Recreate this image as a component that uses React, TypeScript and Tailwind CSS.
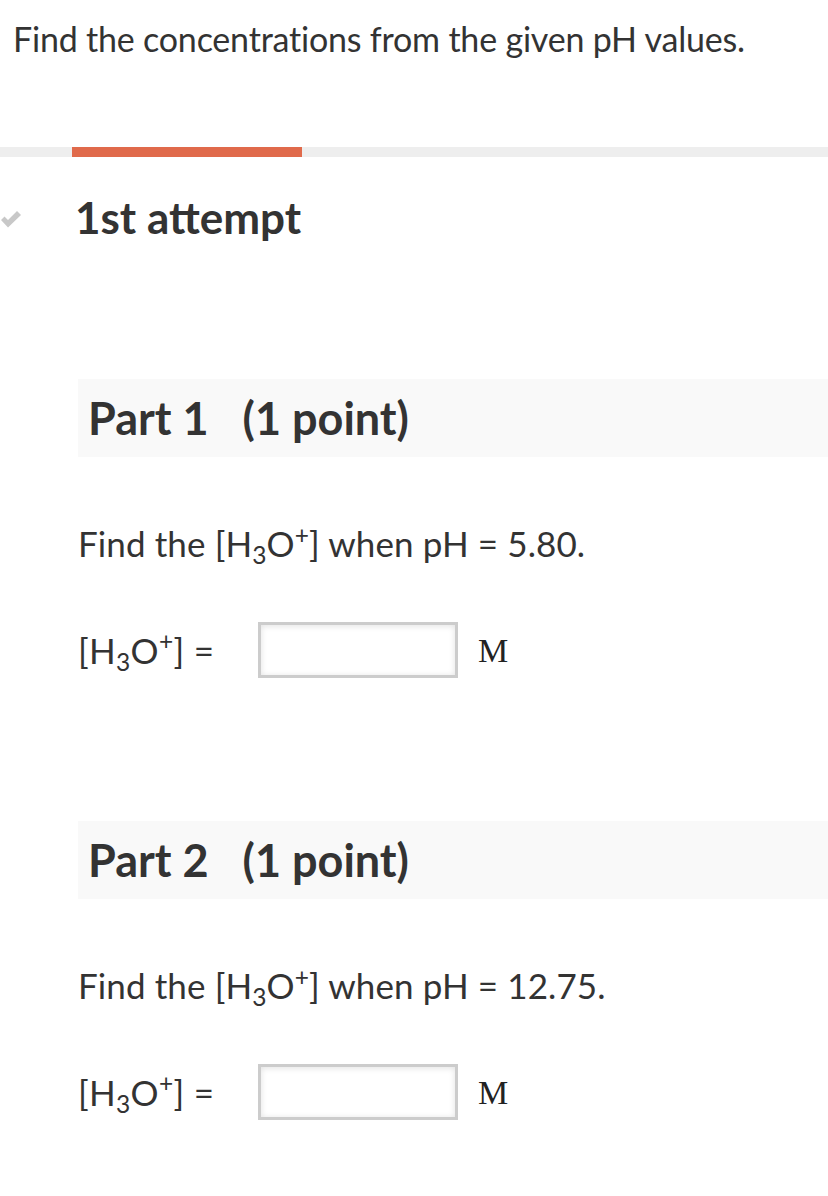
import React from "react";

function Check() {
  return (
    <svg width="22" height="20" viewBox="0 0 22 20" className="block">
      <path d="M1 11 L4.5 7.5 L8 11 L17 2 L21 6 L8 18.5 Z" fill="#c8c8c8" />
    </svg>
  );
}

function H3O() {
  return (
    <span>
      [H<sub className="text-[0.7em] align-baseline relative top-[0.3em]">3</sub>O<sup className="text-[0.7em] align-baseline relative -top-[0.55em]">+</sup>]
    </span>
  );
}

function Part({ n, ph, top }: { n: number; ph: string; top: string }) {
  return (
    <div className={top}>
      <div className="bg-[#f9f9f9] h-[78px] flex items-center pl-[10px] text-[45px] font-bold text-[#333] leading-none">
        <span>Part {n}</span>
        <span className="ml-[34px]">(1 point)</span>
      </div>
      <div className="mt-[64px] text-[35px] text-[#333] leading-[44px] tracking-[0.1px]">
        Find the <H3O /> when pH = {ph}.
      </div>
      <div className="mt-[57px] flex items-center">
        <div className="text-[35px] text-[#333] w-[180px] tracking-[0.3px]">
          <H3O /> =
        </div>
        <div className="w-[200px] h-[56px] border-[3px] border-[#cccccc] bg-white shadow-[inset_0_1px_6px_rgba(0,0,0,0.12)]" />
        <div className="ml-[20px] text-[34px] text-[#222] font-['Liberation_Serif',serif]">M</div>
      </div>
    </div>
  );
}

export default function App() {
  return (
    <div className="w-[828px] h-[1196px] bg-white font-['Lato',sans-serif] overflow-hidden">
      <div className="pt-[17px] pl-[13px] text-[34px] text-[#333] leading-[44px] tracking-[-0.2px]">
        Find the concentrations from the given pH values.
      </div>
      <div className="mt-[86px] h-[10px] bg-[#eeeeee]">
        <div className="ml-[72px] w-[230px] h-[10px] bg-[#e06a4b]" />
      </div>
      <div className="mt-[36px] flex items-center h-[48px]">
        <div className="w-[75px] pt-[4px]">
          <Check />
        </div>
        <div className="text-[44px] font-bold text-[#333]">1st attempt</div>
      </div>
      <div className="ml-[78px]">
        <Part n={1} ph="5.80" top="mt-[138px]" />
        <Part n={2} ph="12.75" top="mt-[143px]" />
      </div>
    </div>
  );
}
